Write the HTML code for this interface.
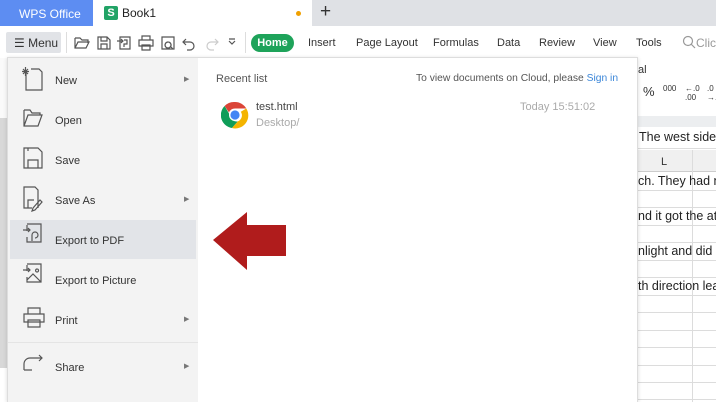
<!DOCTYPE html><html><head><meta charset="utf-8"><style>
*{margin:0;padding:0;box-sizing:border-box}
body{width:716px;height:402px;overflow:hidden;position:relative;background:#fff;font-family:"Liberation Sans",sans-serif;font-size:11px;color:#333}
.a{position:absolute}
.t{position:absolute;white-space:nowrap}
svg{position:absolute;fill:none;stroke:#555;stroke-width:1.2}
.hl{position:absolute;left:636px;width:80px;height:1px;background:#dcdcdc}
.st{position:absolute;white-space:nowrap;font-size:12.5px;color:#222;left:638px}
</style></head><body>
<div class="a" style="left:0;top:0;width:716px;height:26px;background:#dfe1e5"></div>
<div class="a" style="left:0;top:0;width:93px;height:26px;background:#5d8df2"></div>
<div class="t" style="left:19px;top:7px;color:#fff;font-size:12px">WPS Office</div>
<div class="a" style="left:93px;top:0;width:219px;height:26px;background:#fff"></div>
<div class="a" style="left:104px;top:6px;width:14px;height:14px;background:#21a366;border-radius:2px;color:#fff;font-size:11px;font-weight:bold;text-align:center;line-height:14px">S</div>
<div class="t" style="left:122px;top:6px;font-size:12px;color:#222">Book1</div>
<div class="a" style="left:296px;top:11px;width:5px;height:5px;border-radius:50%;background:#f0a000"></div>
<div class="t" style="left:320px;top:1px;font-size:19px;color:#333">+</div>
<div class="a" style="left:6px;top:32px;width:55px;height:21px;background:#e1e3e7;border-radius:2px"></div>
<div class="t" style="left:14px;top:36px;font-size:12px">☰ Menu</div>
<div class="a" style="left:66px;top:32px;width:1px;height:21px;background:#ddd"></div>
<svg style="left:73px;top:34px" width="170" height="18" viewBox="0 0 170 18">
<path d="M2 4h5l2 2h6v3M2 4v10h11l3-6H5l-3 6"/>
<path d="M25 3h9l3 3v9H25zM28 3v4h6V3M28 15v-5h6v5"/>
<path d="M47 3h10v12H47zM44 7h6M48 5l2 2-2 2M51 6h3v4h-3v3"/>
<path d="M69 6V2h8v4M66 6h14v6H66zM69 11h8v5h-8z"/>
<path d="M89 3h12v12H89zM95 8a3 3 0 1 0 .1 0M97 12l3 3"/>
<path d="M113 5l-3 3 3 3M110 8h7a4 4 0 0 1 0 8h-3"/>
<path stroke="#ccc" d="M142 5l3 3-3 3M145 8h-7a4 4 0 0 0 0 8h3"/>
<path d="M156 7l3 3 3-3M156 5h6"/>
</svg>
<div class="a" style="left:245px;top:32px;width:1px;height:21px;background:#ddd"></div>
<div class="a" style="left:251px;top:34px;width:43px;height:18px;background:#1ea35a;border-radius:9px;color:#fff;font-weight:bold;font-size:11px;text-align:center;line-height:18px">Home</div>
<div class="t" style="left:308px;top:37px">Insert</div>
<div class="t" style="left:356px;top:37px">Page Layout</div>
<div class="t" style="left:433px;top:37px">Formulas</div>
<div class="t" style="left:497px;top:37px">Data</div>
<div class="t" style="left:539px;top:37px">Review</div>
<div class="t" style="left:593px;top:37px">View</div>
<div class="t" style="left:636px;top:37px">Tools</div>
<svg style="left:682px;top:35px" width="14" height="14"><circle cx="6" cy="6" r="4.5" stroke="#999"/><path d="M9 9l4 4" stroke="#999"/></svg>
<div class="t" style="left:696px;top:36px;font-size:12px;color:#999">Click</div>
<div class="t" style="left:638px;top:64px;font-size:11px">al</div>
<div class="t" style="left:643px;top:84px;font-size:13px">%</div>
<div class="t" style="left:663px;top:84px;font-size:8px">000</div>
<div class="t" style="left:685px;top:84px;font-size:8px;line-height:9px">←.0<br>.00</div>
<div class="t" style="left:707px;top:84px;font-size:8px;line-height:9px">.0<br>→.</div>
<div class="a" style="left:636px;top:116px;width:80px;height:11px;background:#eceef0"></div>
<div class="a" style="left:636px;top:127px;width:80px;height:22px;border-bottom:1px solid #ddd"></div>
<div class="st" style="left:639px;top:130px">The west side</div>
<div class="a" style="left:636px;top:150px;width:80px;height:22px;background:#f0f0f0;border-bottom:1px solid #ccc"></div>
<div class="t" style="left:661px;top:156px;font-size:11px">L</div>
<div class="a" style="left:692px;top:150px;width:1px;height:252px;background:#dcdcdc"></div>
<div class="hl" style="top:190px"></div><div class="hl" style="top:207px"></div><div class="hl" style="top:225px"></div><div class="hl" style="top:242px"></div><div class="hl" style="top:260px"></div><div class="hl" style="top:277px"></div><div class="hl" style="top:295px"></div><div class="hl" style="top:312px"></div><div class="hl" style="top:330px"></div><div class="hl" style="top:347px"></div><div class="hl" style="top:365px"></div><div class="hl" style="top:382px"></div><div class="hl" style="top:399px"></div>
<div class="st" style="top:174px">ch. They had no</div>
<div class="st" style="top:209px">nd it got the at</div>
<div class="st" style="top:244px">nlight and did s</div>
<div class="st" style="top:279px">th direction lea</div>
<div class="a" style="left:0;top:58px;width:7px;height:60px;background:#fafafa"></div>
<div class="a" style="left:0;top:118px;width:7px;height:250px;background:#d8d8d8"></div>
<div class="a" style="left:7px;top:57px;width:631px;height:345px;background:#fff;border:1px solid #ddd;border-bottom:none;box-shadow:0 1px 4px rgba(0,0,0,.15)"></div>
<div class="a" style="left:8px;top:58px;width:190px;height:344px;background:#f3f3f3"></div>
<div class="a" style="left:10px;top:220px;width:186px;height:39px;background:#e2e4e8"></div>
<div class="a" style="left:8px;top:342px;width:190px;height:1px;background:#e4e4e4"></div>
<svg style="left:22px;top:66px" width="24" height="320" viewBox="0 0 24 320" stroke="#666">
<path d="M4 4v20h16V6l-3-3H9M1 3l5 5M6 3L1 8M3.5 1v9M0 5.5h7"/>
<path d="M2 44h6l2 3h8v2M2 44v16h14l4-11H6L2 60"/>
<path d="M2 82h14l4 4v16H2zM6 102v-8h10v8M6 82v3"/>
<path d="M16 142v-18l-3-3H2v21h8M6 142v-8h6M11 142l7-8 2 2-7 8-3 1z"/>
<path d="M5 158h14v18H5v-5M5 165v-6M1 164h7M6 162l2 2-2 2M10 175v-6a3 3 0 1 1 3 3"/>
<path d="M5 198h14v18H5v-5M5 205v-6M1 204h7M6 202l2 2-2 2M5 214l6-6 8 8M15 203a1.5 1.5 0 1 0 .1 0"/>
<path d="M6 248v-6h12v6M2 248h20v8H2zM6 254h12v7H6z"/>
<path d="M2 304v-6a6 6 0 0 1 6-6h12M17 289l3 3-3 3M2 304h8"/>
</svg>
<div class="t" style="left:55px;top:75px">New</div>
<div class="t" style="left:55px;top:115px">Open</div>
<div class="t" style="left:55px;top:155px">Save</div>
<div class="t" style="left:55px;top:195px">Save As</div>
<div class="t" style="left:55px;top:235px">Export to PDF</div>
<div class="t" style="left:55px;top:275px">Export to Picture</div>
<div class="t" style="left:55px;top:315px">Print</div>
<div class="t" style="left:55px;top:362px">Share</div>
<div class="t" style="left:184px;top:75px;font-size:7px;color:#777">▶</div>
<div class="t" style="left:184px;top:195px;font-size:7px;color:#777">▶</div>
<div class="t" style="left:184px;top:315px;font-size:7px;color:#777">▶</div>
<div class="t" style="left:184px;top:362px;font-size:7px;color:#777">▶</div>
<div class="t" style="left:216px;top:73px;color:#555">Recent list</div>
<div class="t" style="left:416px;top:73px;color:#555;font-size:10.3px">To view documents on Cloud, please <span style="color:#3b86d8">Sign in</span></div>
<svg style="left:221px;top:101px;stroke:none" width="28" height="28" viewBox="0 0 28 28">
<path fill="#db4437" d="M14 1a13 13 0 0 1 11.3 6.5H14a6.5 6.5 0 0 0-6 4L3.6 5A13 13 0 0 1 14 1z"/>
<path fill="#0f9d58" d="M3.6 5l5.7 9.8a6.5 6.5 0 0 0 7.5 5.6L11 27A13 13 0 0 1 3.6 5z"/>
<path fill="#f4b400" d="M25.3 7.5A13 13 0 0 1 11 27l5.8-6.6a6.5 6.5 0 0 0 3-9.7L25.3 7.5z"/>
<circle cx="14" cy="14" r="6" fill="#fff"/><circle cx="14" cy="14" r="4.6" fill="#4285f4"/>
</svg>
<div class="t" style="left:256px;top:101px;color:#444">test.html</div>
<div class="t" style="left:256px;top:117px;color:#aaa">Desktop/</div>
<div class="t" style="left:520px;top:101px;color:#aaa">Today 15:51:02</div>
<svg style="left:212px;top:211px;stroke:none" width="76" height="60"><path fill="#b01c1c" d="M1 29L35 1v13h39v31H35v14z"/></svg>
</body></html>
